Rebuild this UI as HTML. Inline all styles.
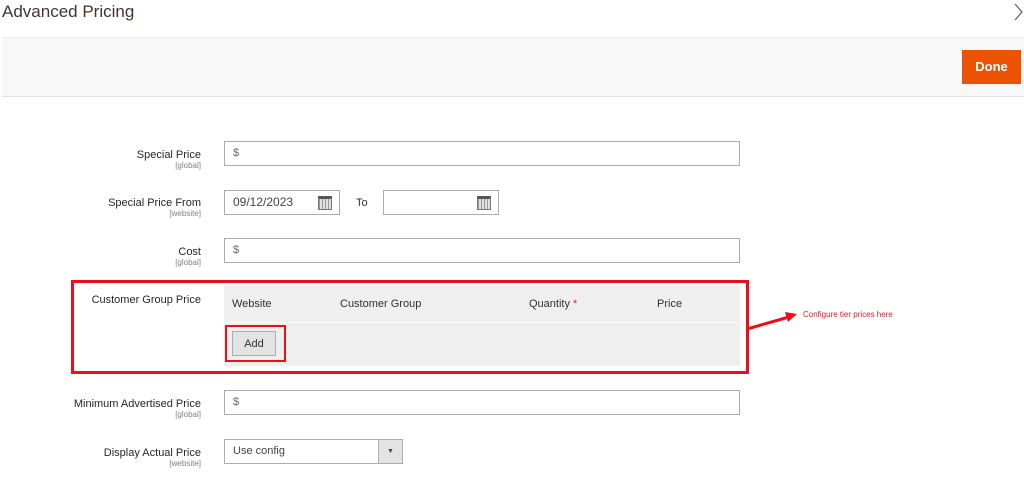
<!DOCTYPE html>
<html><head><meta charset="utf-8"><style>
*{margin:0;padding:0;box-sizing:border-box}
body{width:1024px;height:480px;background:#fff;position:relative;overflow:hidden;font-family:"Liberation Sans",sans-serif;color:#303030}
.a{position:absolute}
.title{left:2px;top:2px;font-size:17px;color:#41362f}
.band{left:2px;top:37px;width:1022px;height:60px;background:#f8f8f8;border-top:1px solid #efefef;border-bottom:1px solid #e3e3e3}
.done{left:962px;top:50px;width:59px;height:34px;background:#eb5202;color:#fff;font-weight:bold;font-size:13px;text-align:center;line-height:34px}
.lbl{right:823px;text-align:right;font-size:11px;color:#262626;white-space:nowrap}
.sc{right:823px;text-align:right;font-size:8px;color:#808080}
.in{border:1px solid #adadad;background:#fff;font-size:11px;color:#666;padding-left:8px;line-height:23px}
.cal{position:absolute;right:7px;top:5px;width:14px;height:14px;border:1px solid #777;background:repeating-linear-gradient(90deg,#999 0 1px,#e0e0e0 1px 3px);border-top:3px solid #555}
.red{border:3px solid #e8101a}
</style></head><body>
<div class="a title">Advanced Pricing</div>
<svg class="a" style="left:1012px;top:2px" width="12" height="20"><path d="M3 2 L10 10 L3 18" fill="none" stroke="#666" stroke-width="1.3"/></svg>
<div class="a band"></div>
<div class="a done">Done</div>

<div class="a lbl" style="top:149px">Special Price</div>
<div class="a sc" style="top:161px">[global]</div>
<div class="a in" style="left:224px;top:141px;width:516px;height:25px">$</div>

<div class="a lbl" style="top:197px">Special Price From</div>
<div class="a sc" style="top:209px">[website]</div>
<div class="a in" style="left:224px;top:190px;width:116px;height:25px;font-size:12px;color:#444">09/12/2023<span class="cal"></span></div>
<div class="a" style="left:356px;top:197px;font-size:11px">To</div>
<div class="a in" style="left:383px;top:190px;width:116px;height:25px"><span class="cal"></span></div>

<div class="a lbl" style="top:246px">Cost</div>
<div class="a sc" style="top:258px">[global]</div>
<div class="a in" style="left:224px;top:238px;width:516px;height:25px">$</div>

<div class="a red" style="left:71px;top:280px;width:678px;height:94px"></div>
<div class="a lbl" style="top:294px">Customer Group Price</div>
<div class="a" style="left:224px;top:286px;width:516px;height:80px;background:#efefef"></div>
<div class="a" style="left:224px;top:322px;width:516px;height:1px;background:#fff"></div>
<div class="a" style="left:232px;top:298px;font-size:11px">Website</div>
<div class="a" style="left:340px;top:298px;font-size:11px">Customer Group</div>
<div class="a" style="left:529px;top:298px;font-size:11px">Quantity <span style="color:#e22626">*</span></div>
<div class="a" style="left:657px;top:298px;font-size:11px">Price</div>
<div class="a red" style="left:225px;top:325px;width:61px;height:37px;border-width:2px"></div>
<div class="a" style="left:232px;top:331px;width:44px;height:25px;background:#e3e3e3;border:1px solid #adadad;font-size:11px;text-align:center;line-height:24px">Add</div>

<svg class="a" style="left:745px;top:305px" width="60" height="30"><line x1="2" y1="24" x2="44" y2="12" stroke="#e8101a" stroke-width="3"/><polygon points="52,9 40,7 43,17" fill="#e8101a"/></svg>
<div class="a" style="left:803px;top:310px;font-size:8px;color:#d3202a">Configure tier prices here</div>

<div class="a lbl" style="top:398px">Minimum Advertised Price</div>
<div class="a sc" style="top:410px">[global]</div>
<div class="a in" style="left:224px;top:390px;width:516px;height:25px">$</div>

<div class="a lbl" style="top:447px">Display Actual Price</div>
<div class="a sc" style="top:459px">[website]</div>
<div class="a in" style="left:224px;top:439px;width:179px;height:25px;color:#444">Use config</div>
<div class="a" style="left:378px;top:440px;width:24px;height:23px;background:#e3e3e3;border-left:1px solid #adadad;font-size:7px;text-align:center;line-height:23px;color:#444">&#9660;</div>
</body></html>
